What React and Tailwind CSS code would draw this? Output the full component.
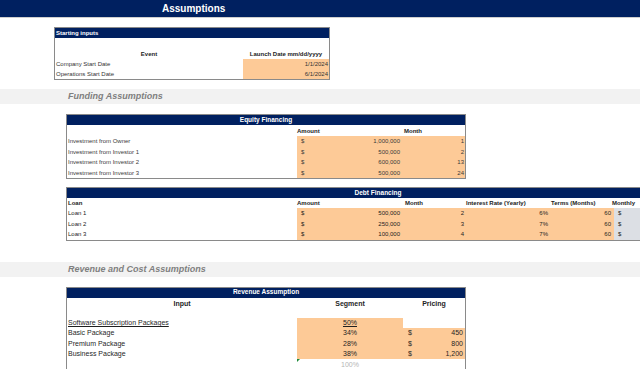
import clsx from 'clsx'

const ORANGE = 'bg-[#fdca97]'

const equityRows = [
  ['Investment from Owner', '1,000,000', '1'],
  ['Investment from Investor 1', '500,000', '2'],
  ['Investment from Investor 2', '600,000', '13'],
  ['Investment from Investor 3', '500,000', '24'],
]

const debtRows = [
  ['Loan 1', '500,000', '2', '6%', '60'],
  ['Loan 2', '250,000', '3', '7%', '60'],
  ['Loan 3', '100,000', '4', '7%', '60'],
]

const packages = [
  ['Basic Package', '34%', '450'],
  ['Premium Package', '28%', '800'],
  ['Business Package', '38%', '1,200'],
]

function TableTitle({ children, className }) {
  return (
    <div className={clsx('h-[10px] bg-[#002060] text-white font-bold text-[6.5px] flex items-center', className)}>
      {children}
    </div>
  )
}

function Band({ children }) {
  return (
    <div className="h-[15px] bg-[#f2f2f2] flex items-center pl-[68px] italic font-bold text-[9px] text-[#7f7f7f]">
      {children}
    </div>
  )
}

export default function App() {
  return (
    <div className="w-[640px] h-[369px] overflow-hidden bg-white font-['Liberation_Sans',Arial,sans-serif] leading-none">
      {/* Page title */}
      <div className="h-[18px] bg-[#002060] border-b border-[#cfcfcf] flex items-center pl-[162px] text-white font-bold text-[10px]">
        Assumptions
      </div>

      {/* Starting inputs */}
      <div className="ml-[54px] mt-[9px] w-[276px] border border-[#8a8a8a] text-[6px] text-[#333]">
        <TableTitle className="pl-[1px] text-[6px]">Starting inputs</TableTitle>
        <div className="h-[11px]" />
        <div className="h-[10px] flex items-center font-bold text-[#222]">
          <div className="w-[188px] text-center">Event</div>
          <div className="flex-1 text-center">Launch Date mm/dd/yyyy</div>
        </div>
        {[
          ['Company Start Date', '1/1/2024'],
          ['Operations Start Date', '6/1/2024'],
        ].map(([label, date]) => (
          <div key={label} className="h-[10px] flex items-center">
            <div className="w-[188px] pl-[1px]">{label}</div>
            <div className={clsx('flex-1 h-full flex items-center justify-end pr-[1px]', ORANGE)}>{date}</div>
          </div>
        ))}
      </div>

      <div className="mt-[9px]">
        <Band>Funding Assumptions</Band>
      </div>

      {/* Equity financing */}
      <div className="ml-[66px] mt-[10px] w-[400px] border border-[#8a8a8a] text-[6px] text-[#3a3a3a]">
        <TableTitle className="justify-center">Equity Financing</TableTitle>
        <div className="h-[11px] flex items-center font-bold text-[#222]">
          <div className="w-[230px]" />
          <div className="w-[106px]">Amount</div>
          <div className="flex-1 pl-[1px]">Month</div>
        </div>
        {equityRows.map(([label, amount, month]) => (
          <div key={label} className="h-[10.5px] flex items-center">
            <div className="w-[230px] pl-[1px]">{label}</div>
            <div className={clsx('w-[106px] h-full flex items-center justify-between pl-[4px] pr-[3px]', ORANGE)}>
              <span>$</span>
              <span>{amount}</span>
            </div>
            <div className={clsx('flex-1 h-full flex items-center justify-end pr-[1px]', ORANGE)}>{month}</div>
          </div>
        ))}
      </div>

      {/* Debt financing */}
      <div className="ml-[66px] mt-[8px] w-[624px] border border-[#8a8a8a] text-[6px] text-[#222]">
        <TableTitle className="justify-center">Debt Financing</TableTitle>
        <div className="h-[10px] flex items-center font-bold">
          <div className="w-[230px] pl-[1px]">Loan</div>
          <div className="w-[106px]">Amount</div>
          <div className="w-[62px] pl-[2px]">Month</div>
          <div className="w-[84px] pl-[1px]">Interest Rate (Yearly)</div>
          <div className="w-[65px] pl-[2px]">Terms (Months)</div>
          <div className="flex-1 -ml-[2px]">Monthly</div>
        </div>
        {debtRows.map(([label, amount, month, rate, terms]) => (
          <div key={label} className="h-[10.5px] flex items-center">
            <div className="w-[230px] pl-[1px]">{label}</div>
            <div className={clsx('w-[106px] h-full flex items-center justify-between pl-[4px] pr-[3px]', ORANGE)}>
              <span>$</span>
              <span>{amount}</span>
            </div>
            <div className={clsx('w-[62px] h-full flex items-center justify-end pr-[1px]', ORANGE)}>{month}</div>
            <div className={clsx('w-[84px] h-full flex items-center justify-end pr-[1px]', ORANGE)}>{rate}</div>
            <div className={clsx('w-[65px] h-full flex items-center justify-end pr-[3px]', ORANGE)}>{terms}</div>
            <div className="flex-1 h-full flex items-center pl-[4px] bg-[#dcdfe4]">$</div>
          </div>
        ))}
      </div>

      <div className="mt-[21px]">
        <Band>Revenue and Cost Assumptions</Band>
      </div>

      {/* Revenue assumption */}
      <div className="ml-[66px] mt-[10px] w-[400px] border-x border-t border-[#8a8a8a] text-[7px] text-[#1f1f1f]">
        <TableTitle className="justify-center">Revenue Assumption</TableTitle>
        <div className="h-[11px] flex items-center font-bold">
          <div className="w-[230px] text-center">Input</div>
          <div className="w-[106px] text-center">Segment</div>
          <div className="flex-1 text-center">Pricing</div>
        </div>
        <div className="h-[9px]" />
        <div className="h-[10px] flex items-center">
          <div className="w-[230px] pl-[1px] underline">Software Subscription Packages</div>
          <div className={clsx('w-[106px] h-full flex items-center justify-center underline', ORANGE)}>50%</div>
          <div className="flex-1" />
        </div>
        {packages.map(([label, share, price]) => (
          <div key={label} className="h-[10.5px] flex items-center">
            <div className="w-[230px] pl-[1px]">{label}</div>
            <div className={clsx('w-[106px] h-full flex items-center justify-center', ORANGE)}>{share}</div>
            <div className={clsx('flex-1 h-full flex items-center justify-between pl-[5px] pr-[2px]', ORANGE)}>
              <span>$</span>
              <span>{price}</span>
            </div>
          </div>
        ))}
        <div className="h-[10px] flex items-center">
          <div className="w-[230px]" />
          <div className="relative w-[106px] h-full flex items-center justify-center text-[#b5b5b5]">
            <span className="absolute left-0 top-0 w-0 h-0 border-t-[3px] border-r-[3px] border-t-[#1e8a3a] border-r-transparent" />
            100%
          </div>
          <div className="flex-1" />
        </div>
      </div>
    </div>
  )
}
